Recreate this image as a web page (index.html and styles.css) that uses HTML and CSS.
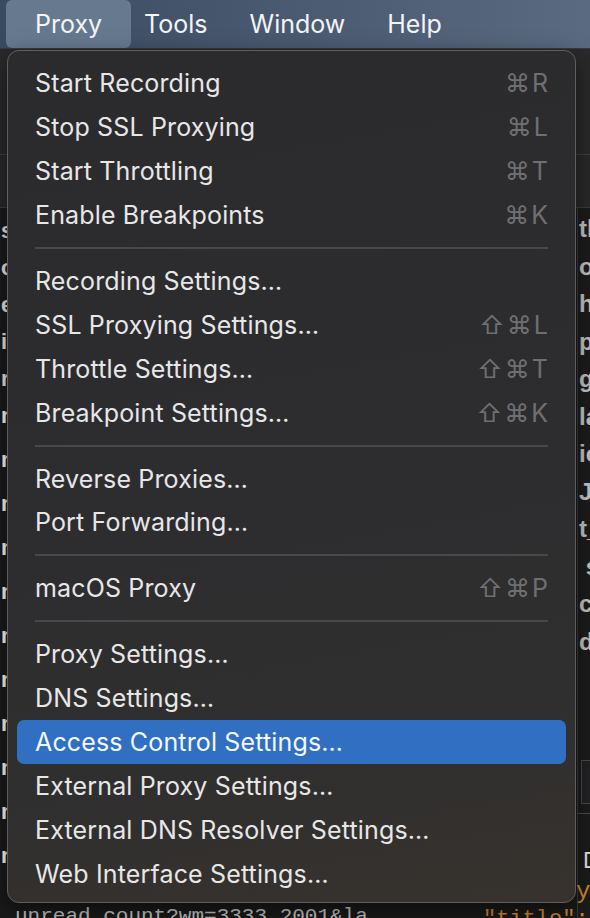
FILE: index.html
```html
<!DOCTYPE html>
<html>
<head>
<meta charset="utf-8">
<link rel="stylesheet" href="styles.css">
</head>
<body>
<div class="screen">
  <div class="menubar">
    <div class="mb-item active">Proxy</div>
    <div class="mb-item">Tools</div>
    <div class="mb-item">Window</div>
    <div class="mb-item">Help</div>
  </div>
  <div class="app">
    <div class="toolbar"><div class="tb-top"></div><div class="tb-bottom"></div></div>
    <div class="panes">
      <div class="left-pane">
        <div class="lrow">s</div><div class="lrow">o</div><div class="lrow">e</div><div class="lrow">i</div><div class="lrow">r</div>
        <div class="lrow blk">n</div><div class="lrow blk">n</div><div class="lrow blk">n</div><div class="lrow blk">n</div><div class="lrow blk">n</div><div class="lrow blk">n</div><div class="lrow blk">n</div><div class="lrow blk">n</div><div class="lrow blk">n</div><div class="lrow blk">n</div><div class="lrow blk">n</div>
        <div class="url">unread_count?wm=3333_2001&amp;la</div>
      </div>
      <div class="right-pane">
        <div class="code">
          <div>th</div><div>o</div><div>he</div><div>p</div><div>g</div><div>la</div><div>ic</div><div>J-</div><div>t_</div><div>&nbsp;s</div><div>c</div><div>d</div>
        </div>
        <div class="rbox"></div>
        <div class="rline"></div>
        <div class="rd">D</div>
        <div class="ry">y</div>
        <div class="rtitle">"title":</div>
      </div>
    </div>
  </div>

  <div class="menu">
    <div class="item"><span>Start Recording</span><span class="sc">⌘R</span></div>
    <div class="item"><span>Stop SSL Proxying</span><span class="sc">⌘L</span></div>
    <div class="item"><span>Start Throttling</span><span class="sc">⌘T</span></div>
    <div class="item"><span>Enable Breakpoints</span><span class="sc">⌘K</span></div>
    <div class="sep"></div>
    <div class="item"><span>Recording Settings…</span></div>
    <div class="item"><span>SSL Proxying Settings…</span><span class="sc">⇧⌘L</span></div>
    <div class="item"><span>Throttle Settings…</span><span class="sc">⇧⌘T</span></div>
    <div class="item"><span>Breakpoint Settings…</span><span class="sc">⇧⌘K</span></div>
    <div class="sep"></div>
    <div class="item"><span>Reverse Proxies…</span></div>
    <div class="item"><span>Port Forwarding…</span></div>
    <div class="sep"></div>
    <div class="item"><span>macOS Proxy</span><span class="sc">⇧⌘P</span></div>
    <div class="sep"></div>
    <div class="item"><span>Proxy Settings…</span></div>
    <div class="item"><span>DNS Settings…</span></div>
    <div class="item selected"><span>Access Control Settings…</span></div>
    <div class="item"><span>External Proxy Settings…</span></div>
    <div class="item"><span>External DNS Resolver Settings…</span></div>
    <div class="item"><span>Web Interface Settings…</span></div>
  </div>
</div>
</body>
</html>
```

FILE: styles.css
```css
* { box-sizing: border-box; }
html, body { margin: 0; padding: 0; }
body {
  width: 590px;
  height: 918px;
  overflow: hidden;
  background: #1c1c1d;
  font-family: Inter, "Noto Sans", "DejaVu Sans", sans-serif;
}
.screen {
  position: relative;
  width: 590px;
  height: 918px;
  overflow: hidden;
}
.menubar {
  height: 48px;
  display: flex;
  align-items: stretch;
  padding-left: 6px;
  gap: 42px;
  background: linear-gradient(90deg, #3a4a60 0%, #4a5a71 50%, #5a6a80 100%);
}
.mb-item {
  display: flex;
  align-items: center;
  color: #f2f4f7;
  font-size: 25px;
}
.mb-item.active {
  background: #66798f;
  border-radius: 6px;
  padding: 0 29px;
  margin-right: -29px;
}

.app {
  height: 870px;
  display: flex;
  flex-direction: column;
}
.toolbar {
  height: 160px;
  flex-shrink: 0;
  display: flex;
  flex-direction: column;
  background: #2a2a2b;
  border-bottom: 1px solid #3c3c3e;
}
.tb-top {
  height: 107px;
  border-top: 1px solid #3a3a3c;
  border-bottom: 1px solid #404042;
}
.tb-bottom { flex: 1; background: #29292a; }
.panes {
  flex: 1;
  display: flex;
  min-height: 0;
}
.left-pane {
  width: 577px;
  flex-shrink: 0;
  overflow: hidden;
  background: #1a1a1a;
  padding-top: 10px;
  color: #e8e8e8;
  font-size: 22px;
  font-weight: 600;
  font-family: "Liberation Sans", sans-serif;
}
.lrow {
  height: 37px;
  padding-left: 1px;
}
.lrow.blk {
  height: 44px;
  color: #fff;
}
.url {
  font-family: "Liberation Mono", monospace;
  font-weight: 400;
  font-size: 21px;
  line-height: 28px;
  color: #c8c8c8;
  margin-left: 15px;
  margin-top: 16px;
  white-space: nowrap;
}
.right-pane {
  flex: 1;
  min-width: 0;
  overflow: visible;
  background: #1c1c1d;
  border-left: 1px solid #3a3a3c;
  display: flex;
  flex-direction: column;
  padding-top: 2px;
}
.code {
  color: #c4c4c4;
  font-family: "Liberation Sans", sans-serif;
  font-weight: 700;
  font-size: 24px;
  line-height: 37.5px;
  padding-left: 1px;
  white-space: nowrap;
}
.rbox {
  flex-shrink: 0;
  margin-top: 100px;
  height: 44px;
  border: 1px solid #4a4a4c;
  border-right: none;
  margin-left: 3px;
  background: #222224;
}
.rline {
  flex-shrink: 0;
  margin-top: 9px;
  height: 1px;
  background: #4a4a4c;
}
.rd {
  flex-shrink: 0;
  margin-top: 32px;
  color: #e8e8e8;
  font-size: 22px;
  margin-left: 5px;
  line-height: 28px;
}
.ry {
  flex-shrink: 0;
  color: #d8892a;
  font-family: "Liberation Mono", monospace;
  font-size: 24px;
  line-height: 24px;
  margin-top: 6px;
  margin-left: -2px;
}
.rtitle {
  flex-shrink: 0;
  color: #d8892a;
  font-family: "Liberation Mono", monospace;
  font-size: 22px;
  line-height: 24px;
  margin-top: 4px;
  margin-left: -95px;
  white-space: nowrap;
}

.menu {
  position: absolute;
  left: 7px;
  top: 50px;
  width: 569px;
  height: 853px;
  border-radius: 12px;
  border: 1px solid #5e5e60;
  background: linear-gradient(170deg, #2b2b2d 0%, #2d2d2f 55%, #302f2f 80%, #37322d 100%);
  box-shadow: 0 8px 24px rgba(0,0,0,0.5);
  padding: 10px 9px 6px 9px;
  display: flex;
  flex-direction: column;
}
.item {
  height: 44px;
  display: flex;
  align-items: center;
  justify-content: space-between;
  padding: 0 18px 0 18px;
  color: #e7e7e7;
  font-size: 25px;
  letter-spacing: 0.15px;
  border-radius: 7px;
}
.item.selected {
  background: #316fc3;
  color: #f4f7fc;
}
.sc {
  color: #6f6f72;
  font-size: 25px;
  font-family: Inter, "DejaVu Sans", sans-serif;
  letter-spacing: 2px;
  margin-right: -2px;
}
.sep {
  height: 22px;
  display: flex;
  align-items: center;
  padding: 0 18px;
}
.sep::before {
  content: "";
  flex: 1;
  height: 2px;
  background: #48484a;
}
```
